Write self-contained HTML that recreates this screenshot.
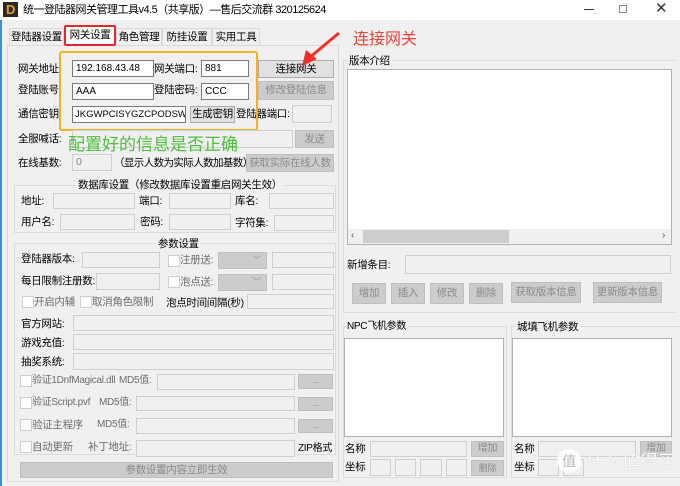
<!DOCTYPE html>
<html><head><meta charset="utf-8"><style>
*{box-sizing:border-box;margin:0;padding:0}
body{width:680px;height:486px;background:#f0f0f0;font-family:"Liberation Sans","Noto Sans CJK SC",sans-serif;font-size:10.5px;letter-spacing:-0.3px;color:#000;position:relative;overflow:hidden}
div{white-space:nowrap}
.a{position:absolute;white-space:nowrap;line-height:16px}
.i{position:absolute;background:#fff;border:1px solid #7a7a7a;font-size:10px;padding-left:3px;line-height:15px;overflow:hidden;letter-spacing:0}
.d{position:absolute;background:#f0f0f0;border:1px solid #cfcfcf}
.b{position:absolute;background:#e1e1e1;border:1px solid #adadad;text-align:center;overflow:hidden}
.bd{position:absolute;background:#cccccc;border:1px solid #bfbfbf;text-align:center;color:#8a8a8a;overflow:hidden}
.g{position:absolute;border:1px solid #dcdcdc}
.gt{position:absolute;background:#f0f0f0;padding:0 2px;line-height:14px;white-space:nowrap}
.gr{color:#6d6d6d}
.cb{position:absolute;width:12px;height:12px;background:#fff;border:1px solid #cfcfcf}
.tab{position:absolute;top:28px;height:17px;border:1px solid #d9d9d9;border-bottom:none;background:#f0f0f0;text-align:center;line-height:16px;overflow:hidden}
</style></head><body>
<div style="position:absolute;left:0;top:0;width:680px;height:20px;background:#fff"></div>
<div style="position:absolute;left:0;top:20px;width:2px;height:466px;background:#3c8ee0"></div>
<div class="a" style="left:3px;top:2px;width:15px;height:15px;background:#2a2a22;color:#e8a020;font-weight:bold;font-size:13px;line-height:15px;text-align:center">D</div>
<div class="a" style="left:23px;top:2px;font-size:11px;letter-spacing:-0.5px">统一登陆器网关管理工具v4.5（共享版）—售后交流群 320125624</div>
<div style="position:absolute;left:584px;top:9px;width:10px;height:1px;background:#333"></div>
<div style="position:absolute;left:619px;top:5px;width:8px;height:8px;border:1px solid #888"></div>
<div class="a" style="left:655px;top:1px;font-size:15px;color:#333">✕</div>

<div style="position:absolute;left:7px;top:45px;width:332px;height:437px;border:1px solid #d9d9d9;background:#f0f0f0"></div>
<div class="tab" style="left:9px;width:55px">登陆器设置</div>
<div class="tab" style="left:64px;top:25px;height:21px;width:52px;background:#fff;border:2px solid #e8262a;border-radius:2px;line-height:17px">网关设置</div>
<div class="tab" style="left:116px;width:46px">角色管理</div>
<div class="tab" style="left:162px;width:50px">防挂设置</div>
<div class="tab" style="left:212px;width:48px">实用工具</div>

<div class="a" style="left:18px;top:61px">网关地址</div>
<div class="i" style="left:72px;top:60px;width:82px;height:17px">192.168.43.48</div>
<div class="a" style="left:154px;top:61px">网关端口:</div>
<div class="i" style="left:201px;top:60px;width:48px;height:17px">881</div>
<div class="b" style="left:258px;top:60px;width:76px;height:18px;line-height:16px">连接网关</div>

<div class="a" style="left:18px;top:82px">登陆账号</div>
<div class="i" style="left:72px;top:83px;width:82px;height:17px">AAA</div>
<div class="a" style="left:154px;top:82px">登陆密码:</div>
<div class="i" style="left:201px;top:83px;width:48px;height:17px">CCC</div>
<div class="bd" style="left:258px;top:81px;width:76px;height:19px;line-height:17px">修改登陆信息</div>

<div class="a" style="left:18px;top:106px">通信密钥</div>
<div class="i" style="left:72px;top:106px;width:114px;height:17px;font-size:9.5px;padding-left:2px">JKGWPCISYGZCPODSWHYM</div>
<div class="b" style="left:190px;top:106px;width:45px;height:17px;line-height:15px">生成密钥</div>
<div class="a" style="left:236px;top:106px">登陆器端口:</div>
<div class="d" style="left:292px;top:105px;width:40px;height:18px"></div>
<div style="position:absolute;left:59px;top:51px;width:199px;height:80px;border:2px solid #f5b21c;border-radius:3px"></div>

<div class="a" style="left:18px;top:131px">全服喊话:</div>
<div class="d" style="left:72px;top:130px;width:221px;height:18px"></div>
<div class="bd" style="left:295px;top:130px;width:39px;height:18px;line-height:16px">发送</div>
<div class="a" style="left:68px;top:134px;font-size:17px;letter-spacing:0;line-height:22px;color:#4cbf3c">配置好的信息是否正确</div>

<div class="a" style="left:18px;top:155px">在线基数:</div>
<div class="d" style="left:72px;top:154px;width:40px;height:17px;color:#888;padding-left:3px;line-height:15px">0</div>
<div class="a" style="left:114px;top:155px;letter-spacing:-0.6px">（显示人数为实际人数加基数）</div>
<div class="bd" style="left:246px;top:154px;width:88px;height:18px;line-height:16px">获取实际在线人数</div>

<div class="g" style="left:14px;top:185px;width:322px;height:48px"></div>
<div class="gt" style="left:76px;top:178px">数据库设置（修改数据库设置重启网关生效）</div>
<div class="a" style="left:21px;top:193px">地址:</div>
<div class="d" style="left:53px;top:193px;width:82px;height:16px"></div>
<div class="a" style="left:139px;top:193px">端口:</div>
<div class="d" style="left:169px;top:193px;width:62px;height:16px"></div>
<div class="a" style="left:235px;top:193px">库名:</div>
<div class="d" style="left:269px;top:193px;width:65px;height:16px"></div>
<div class="a" style="left:21px;top:214px">用户名:</div>
<div class="d" style="left:60px;top:214px;width:75px;height:16px"></div>
<div class="a" style="left:140px;top:214px">密码:</div>
<div class="d" style="left:169px;top:214px;width:62px;height:16px"></div>
<div class="a" style="left:235px;top:215px">字符集:</div>
<div class="d" style="left:274px;top:215px;width:60px;height:16px"></div>

<div class="g" style="left:14px;top:243px;width:322px;height:212px"></div>
<div class="gt" style="left:156px;top:237px">参数设置</div>
<div class="a" style="left:21px;top:251px">登陆器版本:</div>
<div class="d" style="left:82px;top:252px;width:78px;height:16px"></div>
<div class="cb" style="left:168px;top:255px"></div><div class="a gr" style="left:180px;top:252px">注册送:</div>
<div style="position:absolute;left:218px;top:252px;width:49px;height:17px;background:#ccc;border:1px solid #c0c0c0"><span style="position:absolute;right:5px;top:0;color:#999;font-size:9px">﹀</span></div>
<div class="d" style="left:272px;top:252px;width:62px;height:16px"></div>
<div class="a" style="left:21px;top:273px">每日限制注册数:</div>
<div class="d" style="left:96px;top:273px;width:64px;height:17px"></div>
<div class="cb" style="left:168px;top:276px"></div><div class="a gr" style="left:180px;top:274px">泡点送:</div>
<div style="position:absolute;left:218px;top:274px;width:49px;height:17px;background:#ccc;border:1px solid #c0c0c0"><span style="position:absolute;right:5px;top:0;color:#999;font-size:9px">﹀</span></div>
<div class="d" style="left:272px;top:274px;width:62px;height:16px"></div>
<div class="cb" style="left:22px;top:296px"></div><div class="a gr" style="left:34px;top:294px">开启内辅</div>
<div class="cb" style="left:80px;top:296px"></div><div class="a gr" style="left:92px;top:294px">取消角色限制</div>
<div class="a" style="left:166px;top:295px">泡点时间间隔(秒)</div>
<div class="d" style="left:247px;top:294px;width:87px;height:15px"></div>
<div class="a" style="left:21px;top:316px">官方网站:</div>
<div class="d" style="left:73px;top:315px;width:261px;height:16px"></div>
<div class="a" style="left:21px;top:335px">游戏充值:</div>
<div class="d" style="left:73px;top:334px;width:261px;height:16px"></div>
<div class="a" style="left:21px;top:354px">抽奖系统:</div>
<div class="d" style="left:73px;top:353px;width:261px;height:17px"></div>
<div class="cb" style="left:20px;top:375px"></div><div class="a gr" style="left:32px;top:373px;font-size:10px">验证1DnfMagical.dll</div>
<div class="a gr" style="left:119px;top:373px;font-size:10px">MD5值:</div>
<div class="d" style="left:157px;top:374px;width:138px;height:16px"></div>
<div class="bd" style="left:298px;top:374px;width:35px;height:15px;line-height:11px;font-size:9px">...</div>
<div class="cb" style="left:20px;top:397px"></div><div class="a gr" style="left:32px;top:395px;font-size:10px">验证Script.pvf</div>
<div class="a gr" style="left:99px;top:395px;font-size:10px">MD5值:</div>
<div class="d" style="left:136px;top:396px;width:159px;height:15px"></div>
<div class="bd" style="left:298px;top:397px;width:35px;height:14px;line-height:10px;font-size:9px">...</div>
<div class="cb" style="left:20px;top:419px"></div><div class="a gr" style="left:32px;top:417px">验证主程序</div>
<div class="a gr" style="left:97px;top:417px;font-size:10px">MD5值:</div>
<div class="d" style="left:136px;top:418px;width:159px;height:16px"></div>
<div class="bd" style="left:298px;top:419px;width:35px;height:14px;line-height:10px;font-size:9px">...</div>
<div class="cb" style="left:20px;top:441px"></div><div class="a gr" style="left:32px;top:439px">自动更新</div>
<div class="a gr" style="left:88px;top:439px">补丁地址:</div>
<div class="d" style="left:136px;top:440px;width:159px;height:17px"></div>
<div class="a" style="left:298px;top:441px;font-size:10px">ZIP格式</div>
<div class="bd" style="left:20px;top:462px;width:313px;height:16px;line-height:14px">参数设置内容立即生效</div>

<div class="a" style="left:353px;top:29px;font-size:16px;letter-spacing:0;line-height:22px;color:#f5403a">连接网关</div>
<svg style="position:absolute;left:295px;top:28px" width="50" height="45"><line x1="44" y1="5" x2="14" y2="30" stroke="#f0302a" stroke-width="3"/><polygon points="7,38 11,22 22,31" fill="#f0302a"/></svg>

<div class="g" style="left:343px;top:60px;width:333px;height:253px;border-right:none"></div>
<div class="gt" style="left:347px;top:54px">版本介绍</div>
<div style="position:absolute;left:347px;top:69px;width:325px;height:176px;background:#fff;border:1px solid #aeb3b9"></div>
<div style="position:absolute;left:348px;top:229px;width:323px;height:15px;background:#f0f0f0"></div>
<div style="position:absolute;left:363px;top:230px;width:146px;height:13px;background:#cdcdcd"></div>
<div class="a" style="left:351px;top:229px;font-size:10px;color:#555;line-height:14px">‹</div>
<div class="a" style="left:662px;top:229px;font-size:10px;color:#555;line-height:14px">›</div>
<div class="a" style="left:347px;top:257px">新增条目:</div>
<div class="d" style="left:405px;top:255px;width:266px;height:19px"></div>
<div class="bd" style="left:352px;top:283px;width:34px;height:21px;line-height:19px">增加</div>
<div class="bd" style="left:391px;top:283px;width:34px;height:21px;line-height:19px">插入</div>
<div class="bd" style="left:430px;top:283px;width:34px;height:21px;line-height:19px">修改</div>
<div class="bd" style="left:469px;top:283px;width:34px;height:21px;line-height:19px">删除</div>
<div class="bd" style="left:511px;top:282px;width:70px;height:21px;line-height:19px">获取版本信息</div>
<div class="bd" style="left:593px;top:282px;width:69px;height:21px;line-height:19px">更新版本信息</div>

<div class="g" style="left:343px;top:326px;width:164px;height:152px"></div>
<div class="gt" style="left:345px;top:320px;font-size:10px">NPC飞机参数</div>
<div style="position:absolute;left:344px;top:338px;width:160px;height:99px;background:#fff;border:1px solid #aeb3b9"></div>
<div class="a" style="left:345px;top:441px">名称</div>
<div class="d" style="left:370px;top:441px;width:97px;height:16px"></div>
<div class="bd" style="left:471px;top:441px;width:33px;height:16px;line-height:14px;font-size:10px">增加</div>
<div class="a" style="left:345px;top:459px">坐标</div>
<div class="d" style="left:370px;top:459px;width:21px;height:17px"></div>
<div class="d" style="left:395px;top:459px;width:21px;height:17px"></div>
<div class="d" style="left:420px;top:459px;width:22px;height:17px"></div>
<div class="d" style="left:446px;top:459px;width:21px;height:17px"></div>
<div class="bd" style="left:471px;top:460px;width:33px;height:16px;line-height:14px;font-size:9px">删除</div>

<div class="g" style="left:511px;top:326px;width:169px;height:152px;border-right:none"></div>
<div class="gt" style="left:515px;top:320px">城填飞机参数</div>
<div style="position:absolute;left:512px;top:338px;width:160px;height:99px;background:#fff;border:1px solid #aeb3b9"></div>
<div class="a" style="left:514px;top:441px">名称</div>
<div class="d" style="left:538px;top:441px;width:98px;height:16px"></div>
<div class="bd" style="left:640px;top:441px;width:32px;height:16px;line-height:14px;font-size:10px">增加</div>
<div class="a" style="left:514px;top:459px">坐标</div>
<div class="d" style="left:538px;top:459px;width:21px;height:17px"></div>
<div class="d" style="left:563px;top:459px;width:21px;height:17px"></div>
<div style="position:absolute;left:557px;top:449px;width:24px;height:24px;border-radius:50%;background:rgba(255,255,255,.85);color:#bbb;text-align:center;line-height:24px;font-size:14px">值</div>
<div class="a" style="left:586px;top:450px;font-size:18px;letter-spacing:0;line-height:24px;color:rgba(255,255,255,.9);text-shadow:0 0 1px #bbb">什么值得买</div>
</body></html>
